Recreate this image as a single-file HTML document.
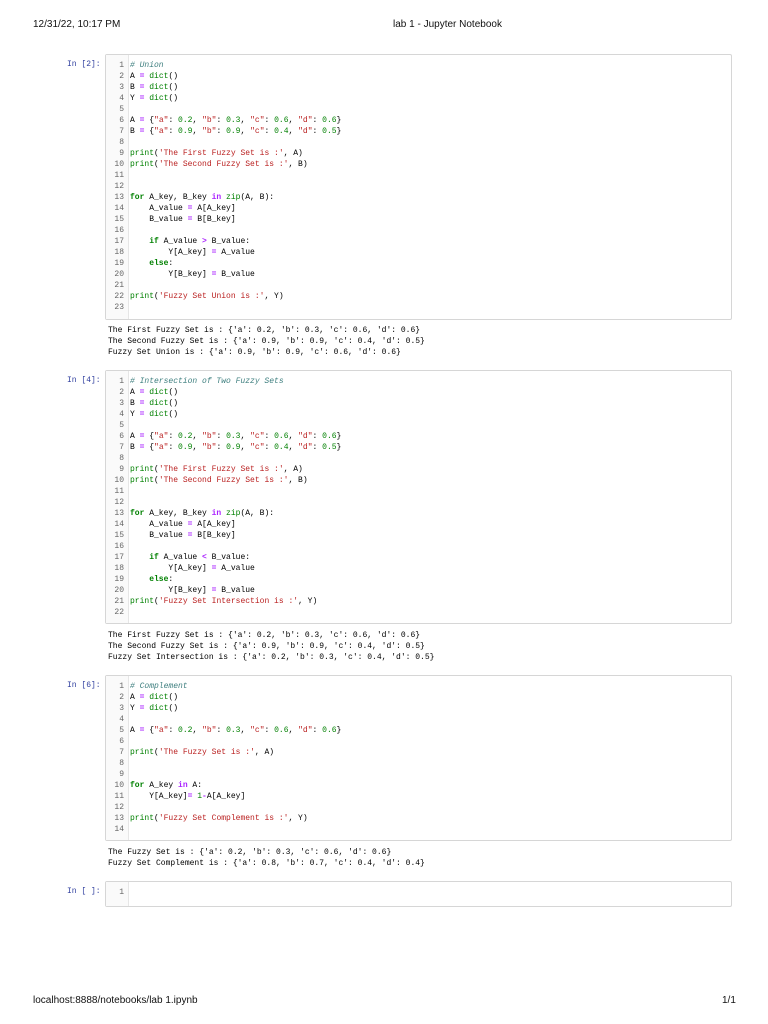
<!DOCTYPE html>
<html><head><meta charset="utf-8"><style>
body{margin:0;width:768px;height:1024px;background:#fff;position:relative;font-family:"Liberation Sans",sans-serif;overflow:hidden}
.hd{position:absolute;font-size:10px;color:#111}
.cell{position:absolute;left:105px;width:625px;border:1px solid #d6d6d6;border-radius:2px;background:#fff}
.gut{position:absolute;left:0;top:0;bottom:0;width:22px;border-right:1px solid #e6e6e6;background:#fafafa}
.code{position:absolute;left:0;top:5px;font-family:"Liberation Mono",monospace;font-size:8px;line-height:11px;white-space:pre;color:#000}
.ln{display:inline-block;width:18px;text-align:right;color:#666;margin-right:6px}
.pr{position:absolute;left:67px;font-family:"Liberation Mono",monospace;font-size:8px;color:#303f9f;line-height:11px}
.out{position:absolute;left:108px;font-family:"Liberation Mono",monospace;font-size:8px;line-height:11px;white-space:pre;color:#000}
.k{color:#008000;font-weight:bold}.b{color:#008000}.s{color:#ba2121}.n{color:#008000}.o{color:#aa22ff;font-weight:bold}.c{color:#408080;font-style:italic}
</style></head><body>
<div class="hd" style="left:33px;top:19px">12/31/22, 10:17 PM</div>
<div class="hd" style="left:393px;top:19px">lab 1 - Jupyter Notebook</div>
<div class="hd" style="left:33px;top:995px">localhost:8888/notebooks/lab 1.ipynb</div>
<div class="hd" style="left:722px;top:995px">1/1</div>

<div class="pr" style="top:59px">In [2]:</div>
<div class="cell" style="top:54px;height:264px"><div class="gut"></div><div class="code"><span class="ln">1</span><span class="c"># Union</span>
<span class="ln">2</span>A <span class="o">=</span> <span class="b">dict</span>()
<span class="ln">3</span>B <span class="o">=</span> <span class="b">dict</span>()
<span class="ln">4</span>Y <span class="o">=</span> <span class="b">dict</span>()
<span class="ln">5</span>
<span class="ln">6</span>A <span class="o">=</span> {<span class="s">"a"</span>: <span class="n">0.2</span>, <span class="s">"b"</span>: <span class="n">0.3</span>, <span class="s">"c"</span>: <span class="n">0.6</span>, <span class="s">"d"</span>: <span class="n">0.6</span>}
<span class="ln">7</span>B <span class="o">=</span> {<span class="s">"a"</span>: <span class="n">0.9</span>, <span class="s">"b"</span>: <span class="n">0.9</span>, <span class="s">"c"</span>: <span class="n">0.4</span>, <span class="s">"d"</span>: <span class="n">0.5</span>}
<span class="ln">8</span>
<span class="ln">9</span><span class="b">print</span>(<span class="s">'The First Fuzzy Set is :'</span>, A)
<span class="ln">10</span><span class="b">print</span>(<span class="s">'The Second Fuzzy Set is :'</span>, B)
<span class="ln">11</span>
<span class="ln">12</span>
<span class="ln">13</span><span class="k">for</span> A_key, B_key <span class="o">in</span> <span class="b">zip</span>(A, B):
<span class="ln">14</span>    A_value <span class="o">=</span> A[A_key]
<span class="ln">15</span>    B_value <span class="o">=</span> B[B_key]
<span class="ln">16</span>
<span class="ln">17</span>    <span class="k">if</span> A_value <span class="o">&gt;</span> B_value:
<span class="ln">18</span>        Y[A_key] <span class="o">=</span> A_value
<span class="ln">19</span>    <span class="k">else</span>:
<span class="ln">20</span>        Y[B_key] <span class="o">=</span> B_value
<span class="ln">21</span>
<span class="ln">22</span><span class="b">print</span>(<span class="s">'Fuzzy Set Union is :'</span>, Y)
<span class="ln">23</span></div></div>
<div class="out" style="top:325px">The First Fuzzy Set is : {'a': 0.2, 'b': 0.3, 'c': 0.6, 'd': 0.6}
The Second Fuzzy Set is : {'a': 0.9, 'b': 0.9, 'c': 0.4, 'd': 0.5}
Fuzzy Set Union is : {'a': 0.9, 'b': 0.9, 'c': 0.6, 'd': 0.6}</div>

<div class="pr" style="top:375px">In [4]:</div>
<div class="cell" style="top:370px;height:252px"><div class="gut"></div><div class="code"><span class="ln">1</span><span class="c"># Intersection of Two Fuzzy Sets</span>
<span class="ln">2</span>A <span class="o">=</span> <span class="b">dict</span>()
<span class="ln">3</span>B <span class="o">=</span> <span class="b">dict</span>()
<span class="ln">4</span>Y <span class="o">=</span> <span class="b">dict</span>()
<span class="ln">5</span>
<span class="ln">6</span>A <span class="o">=</span> {<span class="s">"a"</span>: <span class="n">0.2</span>, <span class="s">"b"</span>: <span class="n">0.3</span>, <span class="s">"c"</span>: <span class="n">0.6</span>, <span class="s">"d"</span>: <span class="n">0.6</span>}
<span class="ln">7</span>B <span class="o">=</span> {<span class="s">"a"</span>: <span class="n">0.9</span>, <span class="s">"b"</span>: <span class="n">0.9</span>, <span class="s">"c"</span>: <span class="n">0.4</span>, <span class="s">"d"</span>: <span class="n">0.5</span>}
<span class="ln">8</span>
<span class="ln">9</span><span class="b">print</span>(<span class="s">'The First Fuzzy Set is :'</span>, A)
<span class="ln">10</span><span class="b">print</span>(<span class="s">'The Second Fuzzy Set is :'</span>, B)
<span class="ln">11</span>
<span class="ln">12</span>
<span class="ln">13</span><span class="k">for</span> A_key, B_key <span class="o">in</span> <span class="b">zip</span>(A, B):
<span class="ln">14</span>    A_value <span class="o">=</span> A[A_key]
<span class="ln">15</span>    B_value <span class="o">=</span> B[B_key]
<span class="ln">16</span>
<span class="ln">17</span>    <span class="k">if</span> A_value <span class="o">&lt;</span> B_value:
<span class="ln">18</span>        Y[A_key] <span class="o">=</span> A_value
<span class="ln">19</span>    <span class="k">else</span>:
<span class="ln">20</span>        Y[B_key] <span class="o">=</span> B_value
<span class="ln">21</span><span class="b">print</span>(<span class="s">'Fuzzy Set Intersection is :'</span>, Y)
<span class="ln">22</span></div></div>
<div class="out" style="top:630px">The First Fuzzy Set is : {'a': 0.2, 'b': 0.3, 'c': 0.6, 'd': 0.6}
The Second Fuzzy Set is : {'a': 0.9, 'b': 0.9, 'c': 0.4, 'd': 0.5}
Fuzzy Set Intersection is : {'a': 0.2, 'b': 0.3, 'c': 0.4, 'd': 0.5}</div>

<div class="pr" style="top:680px">In [6]:</div>
<div class="cell" style="top:675px;height:164px"><div class="gut"></div><div class="code"><span class="ln">1</span><span class="c"># Complement</span>
<span class="ln">2</span>A <span class="o">=</span> <span class="b">dict</span>()
<span class="ln">3</span>Y <span class="o">=</span> <span class="b">dict</span>()
<span class="ln">4</span>
<span class="ln">5</span>A <span class="o">=</span> {<span class="s">"a"</span>: <span class="n">0.2</span>, <span class="s">"b"</span>: <span class="n">0.3</span>, <span class="s">"c"</span>: <span class="n">0.6</span>, <span class="s">"d"</span>: <span class="n">0.6</span>}
<span class="ln">6</span>
<span class="ln">7</span><span class="b">print</span>(<span class="s">'The Fuzzy Set is :'</span>, A)
<span class="ln">8</span>
<span class="ln">9</span>
<span class="ln">10</span><span class="k">for</span> A_key <span class="o">in</span> A:
<span class="ln">11</span>    Y[A_key]<span class="o">=</span> <span class="n">1</span><span class="o">-</span>A[A_key]
<span class="ln">12</span>
<span class="ln">13</span><span class="b">print</span>(<span class="s">'Fuzzy Set Complement is :'</span>, Y)
<span class="ln">14</span></div></div>
<div class="out" style="top:847px">The Fuzzy Set is : {'a': 0.2, 'b': 0.3, 'c': 0.6, 'd': 0.6}
Fuzzy Set Complement is : {'a': 0.8, 'b': 0.7, 'c': 0.4, 'd': 0.4}</div>

<div class="pr" style="top:886px">In [ ]:</div>
<div class="cell" style="top:881px;height:24px"><div class="gut"></div><div class="code"><span class="ln">1</span></div></div>
</body></html>
